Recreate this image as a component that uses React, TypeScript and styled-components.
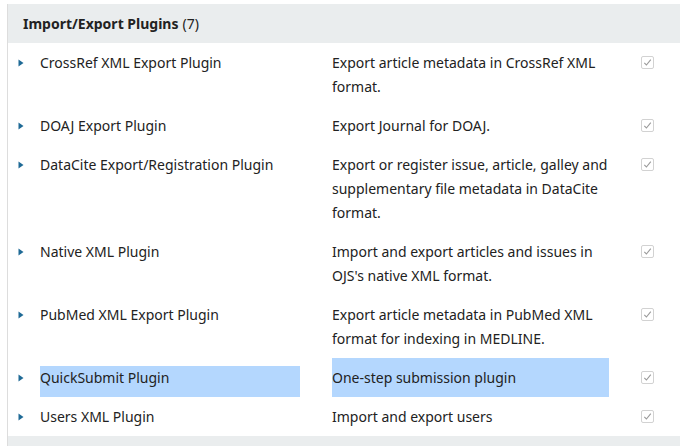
import React from "react";
import styled, { createGlobalStyle } from "styled-components";

const GlobalStyle = createGlobalStyle`
	html, body {
		margin: 0;
		padding: 0;
		background: #fff;
	}

	body {
		font-family: "Noto Sans", "Open Sans", sans-serif;
		font-size: 14px;
		color: #222;
	}
`;

const Panel = styled("section")`
	margin: 4px 0 0 7px;
	border-left: 1px solid #dddddd;
	overflow: hidden;
`;

const Header = styled("header")`
	background: #eaedee;
	height: 39px;
	display: flex;
	align-items: center;
	padding-left: 15px;
	font-size: 14px;
`;

const Title = styled("span")`
	font-weight: 700;
`;

const Count = styled("span")`
	margin-left: 4px;
`;

const Rows = styled("ul")`
	list-style: none;
	margin: 0;
	padding: 0;
`;

// name and description tracks include the 32px gutter that follows them
const Row = styled("li")`
	display: grid;
	grid-template-columns: 32px 292px 309px 13px;
	line-height: 24px;
`;

const Toggle = styled("button")`
	border: 0;
	background: none;
	padding: 8px 0 0 10px;
	margin: 0;
	height: 32px;
	display: flex;
	align-items: center;
	cursor: pointer;
`;

const Cell = styled("div")<{ $selected?: boolean; $flush?: boolean }>`
	margin-right: 32px;
	padding: 8px 0 7px;
	background: ${({ $selected, $flush }): string =>
		!$selected
			? "none"
			: $flush
			? "#b4d7fe"
			: "linear-gradient(transparent 8px, #b4d7fe 8px)"};
`;

const CheckCell = styled("div")`
	padding-top: 13px;
`;

const CheckBox = styled("span")`
	display: flex;
	align-items: center;
	justify-content: center;
	box-sizing: border-box;
	width: 13px;
	height: 13px;
	border: 1px solid #d2d2d2;
	border-radius: 2px;
	background: #fff;
`;

const Footer = styled("div")`
	background: #eaedee;
	height: 20px;
`;

interface Plugin {
	name: string;
	description: string;
	selected?: boolean;
}

const plugins: Array<Plugin> = [
	{
		name: "CrossRef XML Export Plugin",
		description: "Export article metadata in CrossRef XML format.",
	},
	{ name: "DOAJ Export Plugin", description: "Export Journal for DOAJ." },
	{
		name: "DataCite Export/Registration Plugin",
		description:
			"Export or register issue, article, galley and supplementary file metadata in DataCite format.",
	},
	{
		name: "Native XML Plugin",
		description:
			"Import and export articles and issues in OJS's native XML format.",
	},
	{
		name: "PubMed XML Export Plugin",
		description:
			"Export article metadata in PubMed XML format for indexing in MEDLINE.",
	},
	{
		name: "QuickSubmit Plugin",
		description: "One-step submission plugin",
		selected: true,
	},
	{ name: "Users XML Plugin", description: "Import and export users" },
];

const Arrow = (): React.ReactElement => (
	<svg width="6" height="8" viewBox="0 0 6 8" aria-hidden>
		<path d="M0.5 0.5 L5.5 4 L0.5 7.5 Z" fill="#1f6a96" />
	</svg>
);

const Check = (): React.ReactElement => (
	<svg width="9" height="9" viewBox="0 0 9 9" aria-hidden>
		<path
			d="M1.3 4.9 L3.4 7 L7.8 1.6"
			fill="none"
			stroke="#9a9a9a"
			strokeWidth="1.1"
		/>
	</svg>
);

export default function App(): React.ReactElement {
	return (
		<>
			<GlobalStyle />
			<Panel>
				<Header>
					<Title>Import/Export Plugins</Title>
					<Count>(7)</Count>
				</Header>
				<Rows>
					{plugins.map(plugin => (
						<Row key={plugin.name}>
							<Toggle aria-label={`Show details for ${plugin.name}`}>
								<Arrow />
							</Toggle>
							<Cell $selected={plugin.selected}>{plugin.name}</Cell>
							<Cell $selected={plugin.selected} $flush>
								{plugin.description}
							</Cell>
							<CheckCell>
								<CheckBox role="checkbox" aria-checked aria-disabled>
									<Check />
								</CheckBox>
							</CheckCell>
						</Row>
					))}
				</Rows>
				<Footer />
			</Panel>
		</>
	);
}
